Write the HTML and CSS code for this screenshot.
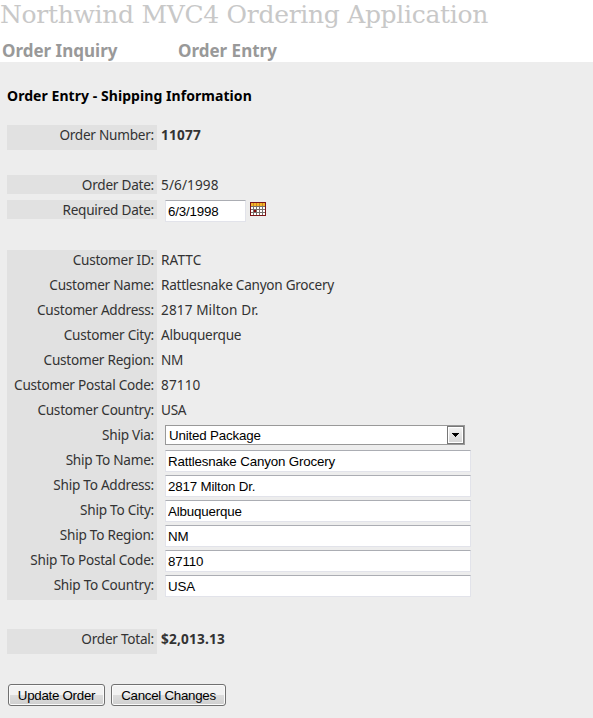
FILE: index.html
```html
<!DOCTYPE html>
<html lang="en">
<head>
    <meta charset="UTF-8">
    <title>Northwind MVC4 Ordering Application</title>
    <link rel="stylesheet" href="styles.css">
</head>
<body>

    <!-- Header -->
    <header class="header">
        <h1 class="site-title">Northwind MVC4 Ordering Application</h1>
        <nav class="menu">
            <a href="#" class="menu-inquiry">Order Inquiry</a>
            <a href="#" class="menu-entry">Order Entry</a>
        </nav>
    </header>

    <!-- Shipping Form -->
    <form class="content">
        <h2>Order Entry - Shipping Information</h2>

        <div class="group">
            <div class="row"><label>Order Number:</label><span class="value strong">11077</span></div>
        </div>

        <div class="group dates">
            <div class="row"><label>Order Date:</label><span class="value number">5/6/1998</span></div>
            <div class="row">
                <label for="requiredDate">Required Date:</label>
                <input type="text" id="requiredDate" class="date" value="6/3/1998">
                <svg class="calendar" width="16" height="14" viewBox="0 0 16 14" shape-rendering="crispEdges">
                    <rect width="16" height="14" fill="#7b1517"/>
                    <rect x="1" y="1" width="14" height="3" fill="#f5b52b"/>
                    <path d="M3.5 1v3M6.5 1v3M9.5 1v3M12.5 1v3" stroke="#c98522"/>
                    <rect x="1" y="4" width="14" height="9" fill="#77706c"/>
                    <path d="M1 5h2v2H1zM4 5h2v2H4zM7 5h2v2H7zM10 5h2v2h-2zM13 5h2v2h-2zM1 8h2v2H1zM7 8h2v2H7zM10 8h2v2h-2zM13 8h2v2h-2zM1 11h2v2H1zM4 11h2v2H4zM7 11h2v2H7zM10 11h2v2h-2zM13 11h2v2h-2z" fill="#fff"/>
                    <rect x="4" y="8" width="2" height="2" fill="#86080c"/>
                </svg>
            </div>
        </div>

        <div class="group customer">
            <div class="row"><label>Customer ID:</label><span class="value number">RATTC</span></div>
            <div class="row"><label>Customer Name:</label><span class="value">Rattlesnake Canyon Grocery</span></div>
            <div class="row"><label>Customer Address:</label><span class="value number">2817 Milton Dr.</span></div>
            <div class="row"><label>Customer City:</label><span class="value">Albuquerque</span></div>
            <div class="row"><label>Customer Region:</label><span class="value">NM</span></div>
            <div class="row"><label>Customer Postal Code:</label><span class="value number">87110</span></div>
            <div class="row"><label>Customer Country:</label><span class="value">USA</span></div>
            <div class="row">
                <label for="shipVia">Ship Via:</label>
                <div class="select-box">
                    <select id="shipVia">
                        <option>United Package</option>
                    </select>
                    <span class="arrow"><svg width="7" height="4" viewBox="0 0 7 4" shape-rendering="crispEdges"><path d="M0 0h7v1H6v1H5v1H4v1H3V3H2V2H1V1H0z"/></svg></span>
                </div>
            </div>
            <div class="row"><label for="shipName">Ship To Name:</label><input type="text" id="shipName" value="Rattlesnake Canyon Grocery"></div>
            <div class="row"><label for="shipAddress">Ship To Address:</label><input type="text" id="shipAddress" value="2817 Milton Dr."></div>
            <div class="row"><label for="shipCity">Ship To City:</label><input type="text" id="shipCity" value="Albuquerque"></div>
            <div class="row"><label for="shipRegion">Ship To Region:</label><input type="text" id="shipRegion" value="NM"></div>
            <div class="row"><label for="shipPostal">Ship To Postal Code:</label><input type="text" id="shipPostal" value="87110"></div>
            <div class="row"><label for="shipCountry">Ship To Country:</label><input type="text" id="shipCountry" value="USA"></div>
        </div>

        <div class="group total">
            <div class="row"><label>Order Total:</label><span class="value strong">$2,013.13</span></div>
        </div>

        <div class="buttons">
            <button type="button" class="update">Update Order</button>
            <button type="button" class="cancel">Cancel Changes</button>
        </div>
    </form>

</body>
</html>
```
FILE: styles.css
```css
/* General Styling */
* {
    box-sizing: border-box;
}

body {
    margin: 0;
    background: #ededed;
    color: #333;
    font-family: "Noto Sans", "Open Sans", sans-serif;
    font-size: 13.6px;
    height: 718px;
    overflow: hidden;
}

/* Header */
.header {
    height: 62px;
    background: #fff;
}

.site-title {
    margin: 0;
    height: 38px;
    line-height: 29px;
    font-family: "DejaVu Serif", serif;
    font-size: 25px;
    font-weight: normal;
    letter-spacing: -0.3px;
    color: #c8c8c8;
    white-space: nowrap;
}

.menu {
    display: flex;
    padding-left: 2px;
    line-height: 26px;
    font-size: 17px;
    font-weight: bold;
}

.menu a {
    color: #999;
    text-decoration: none;
    white-space: nowrap;
}

.menu-inquiry {
    width: 176px;
}

/* Form */
.content {
    padding: 0 7px;
}

h2 {
    margin: 0;
    height: 63px;
    line-height: 68px;
    font-size: 14px;
    letter-spacing: 0.06px;
    color: #000;
}

.group {
    margin-bottom: 25px;
}

.row {
    display: flex;
    height: 25px;
    line-height: 19px;
}

label {
    width: 150px;
    padding-right: 3px;
    background: #e1e1e1;
    letter-spacing: -0.25px;
    text-align: right;
    white-space: nowrap;
}

.dates label {
    height: 19px;
}

.value {
    margin-left: 4px;
    letter-spacing: -0.27px;
    white-space: nowrap;
}

.number {
    letter-spacing: 0.1px;
}

.strong {
    font-weight: bold;
    letter-spacing: 0.2px;
}

input, select, button {
    font-family: "Liberation Sans", Arial, sans-serif;
    font-size: 13.33px;
    letter-spacing: -0.16px;
    color: #000;
}

input {
    width: 306px;
    height: 22px;
    margin-left: 8px;
    padding: 1px 2px 0;
    border: 1px solid #e2e3ea;
    border-top-color: #abadb3;
    background: #fff;
}

.date {
    width: 81px;
}

.calendar {
    margin: 2px 0 0 4px;
}

.select-box {
    display: flex;
    width: 300px;
    height: 20px;
    margin-left: 8px;
    border: 1px solid #999;
    background: #fff;
}

select {
    flex: 1;
    padding: 0 3px;
    border: none;
    background: transparent;
    appearance: none;
}

.arrow {
    display: flex;
    align-items: center;
    justify-content: center;
    width: 17px;
    border: 1px solid #777;
    box-shadow: inset 0 0 0 1px #fff;
    background: linear-gradient(#f2f2f2, #d4d4d4);
}

/* Total */
.customer {
    margin-bottom: 29px;
}

.total {
    margin-bottom: 30px;
}

/* Buttons */
.buttons {
    display: flex;
    gap: 6px;
    padding-left: 1px;
}

button {
    height: 22px;
    padding: 0;
    border: 1px solid #707070;
    border-radius: 3px;
    box-shadow: inset 0 0 0 1px #fbfbfb;
    background: linear-gradient(#f2f2f2 50%, #ddd 50%, #cfcfcf);
    letter-spacing: -0.28px;
    white-space: nowrap;
}

.update {
    width: 97px;
}

.cancel {
    width: 115px;
}
```
